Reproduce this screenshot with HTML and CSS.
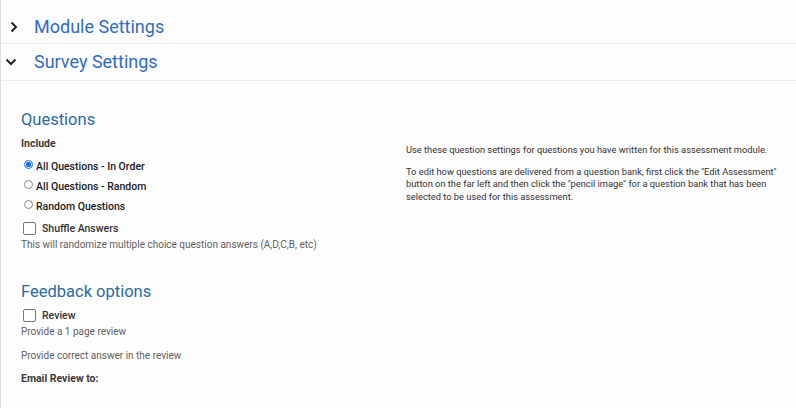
FILE: index.html
```html
<!DOCTYPE html>
<html>
<head>
<meta charset="utf-8">
<link rel="stylesheet" href="styles.css">
</head>
<body>
<div class="page">
  <div class="acc-head first">
    <svg class="chev chev-right" width="10" height="12" viewBox="0 0 10 12"><path d="M2.5 1.5 L7 6 L2.5 10.5" fill="none" stroke="#222" stroke-width="2"/></svg>
    <span class="acc-title">Module Settings</span>
  </div>
  <div class="acc-head second">
    <svg class="chev chev-down" width="12" height="8" viewBox="0 0 12 8"><path d="M1.5 1.5 L6 6 L10.5 1.5" fill="none" stroke="#222" stroke-width="2"/></svg>
    <span class="acc-title">Survey Settings</span>
  </div>
  <div class="content">
    <div class="left">
      <h2 class="section-title">Questions</h2>
      <div class="label">Include</div>
      <div class="radios">
        <label class="radio"><span class="rb checked"></span>All Questions - In Order</label>
        <label class="radio"><span class="rb"></span>All Questions - Random</label>
        <label class="radio"><span class="rb"></span>Random Questions</label>
      </div>
      <label class="check"><span class="cb"></span>Shuffle Answers</label>
      <div class="help">This will randomize multiple choice question answers (A,D,C,B, etc)</div>

      <h2 class="section-title fb">Feedback options</h2>
      <label class="check review"><span class="cb"></span>Review</label>
      <div class="help">Provide a 1 page review</div>
      <div class="help gap">Provide correct answer in the review</div>
      <div class="label email">Email Review to:</div>
    </div>
    <div class="right">
      <p>Use these question settings for questions you have written for this assessment module.</p>
      <p>To edit how questions are delivered from a question bank, first click the "Edit Assessment" button on the far left and then click the "pencil image" for a question bank that has been selected to be used for this assessment.</p>
    </div>
  </div>
</div>
</body>
</html>
```
FILE: styles.css
```css
html, body {
  margin: 0;
  padding: 0;
  background: #fdfdfd;
  font-family: Roboto, "Liberation Sans", sans-serif;
}
.page {
  width: 796px;
  height: 408px;
  box-sizing: border-box;
  border-left: 1px solid #dcdcdc;
  overflow: hidden;
}
.acc-head {
  display: flex;
  align-items: center;
  border-bottom: 1px solid #ebebeb;
  box-sizing: border-box;
}
.acc-head.first {
  height: 44px;
  padding-top: 11px;
}
.acc-head.second { height: 37px; }
.chev { flex: none; }
.chev-right {
  margin-left: 8px;
  margin-right: 15px;
}
.chev-down {
  margin-left: 4px;
  margin-right: 17px;
}
.acc-title {
  font-size: 18px;
  color: #2f6cc1;
  line-height: 1;
}
.content {
  display: flex;
  padding-left: 20px;
  padding-top: 28px;
}
.left {
  width: 385px;
  flex: none;
}
.section-title {
  margin: 0;
  font-weight: 400;
  font-size: 16.5px;
  line-height: 22px;
  color: #2c6aa3;
}
.label {
  font-size: 10.5px;
  font-weight: 700;
  color: #3a3a3a;
  margin-top: 6px;
}
.radios {
  margin-top: 9px;
  display: flex;
  flex-direction: column;
  gap: 6px;
}
.radio {
  display: flex;
  align-items: center;
  font-size: 10.5px;
  font-weight: 500;
  color: #222;
  height: 14px;
  margin-left: 3px;
}
.rb {
  width: 9px;
  height: 9px;
  border: 1px solid #888;
  border-radius: 50%;
  margin-right: 3px;
  box-sizing: border-box;
  position: relative;
  top: -2px;
  background: #fff;
}
.rb.checked {
  border-color: #1a73e8;
  background: radial-gradient(circle, #1a73e8 0 2.6px, #fff 3px);
}
.check {
  display: flex;
  align-items: center;
  font-size: 10.5px;
  font-weight: 500;
  color: #333;
  margin-top: 8px;
  margin-left: 2px;
  height: 14px;
}
.check.review { margin-top: 5px; }
.cb {
  width: 13px;
  height: 13px;
  box-sizing: border-box;
  border: 1px solid #777;
  border-radius: 2px;
  margin-right: 6px;
  background: #fff;
}
.help {
  font-size: 10px;
  color: #5f5f5f;
  margin-top: 3px;
  line-height: 13px;
}
.help.gap { margin-top: 11px; }
.section-title.fb { margin-top: 30px; }
.label.email { margin-top: 10px; }
.right {
  padding-top: 35px;
  width: 372px;
}
.right p {
  margin: 0 0 9px 0;
  font-size: 9.3px;
  line-height: 12.5px;
  color: #333;
}
```
